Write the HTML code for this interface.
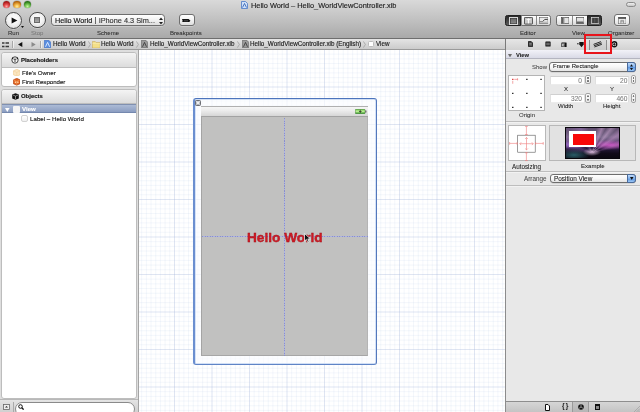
<!DOCTYPE html>
<html><head><meta charset="utf-8">
<style>
*{margin:0;padding:0;box-sizing:border-box}
html,body{width:640px;height:412px;overflow:hidden;background:#e6e6e6}
body{position:relative;font-family:"Liberation Sans",sans-serif;color:#1a1a1a}
.a{position:absolute}
.t{position:absolute;white-space:nowrap;line-height:1;-webkit-text-stroke:.14px currentColor;will-change:transform}
#insp .t{-webkit-text-stroke:.06px currentColor}
#tb .lbl{-webkit-text-stroke:.05px currentColor}
/* toolbar */
#tb{left:0;top:0;width:640px;height:39px;background:linear-gradient(#d9d9d9,#bdbdbd 60%,#a9a9a9);border-bottom:1px solid #6e6e6e}
#bc{left:0;top:39px;width:640px;height:11px;background:linear-gradient(#e4e4e4,#cbcbcb);border-bottom:1px solid #9a9a9a}
#nav{left:0;top:50px;width:139px;height:362px;background:#dedede;border-right:1px solid #a4a4a4}
#canvas{left:139px;top:50px;width:366px;height:362px;background:#fff;overflow:hidden}
#insp{left:505px;top:50px;width:135px;height:362px;background:#e8e8e8}
#insp::before{content:"";position:absolute;left:0;top:0;width:1px;height:362px;background:#8c8c8c;z-index:5}

.tl{width:7.2px;height:7.2px;border-radius:50%;box-shadow:0 0 0 .4px rgba(0,0,0,.25),0 .6px .5px rgba(255,255,255,.5)}
.rb{border-radius:50%;border:1.1px solid #4a4a4a;background:radial-gradient(circle at 50% 40%,#ffffff 0,#f4f4f4 45%,#cfcfcf 100%);box-shadow:0 .6px .5px rgba(255,255,255,.6)}
.lbl{font-size:6px}
.btn{border:1px solid #6e6e6e;background:linear-gradient(#ffffff,#f2f2f2 50%,#dedede);box-shadow:0 .6px .4px rgba(255,255,255,.5)}
.seg{border:1px solid #6e6e6e;border-radius:2.5px;background:linear-gradient(#ffffff,#ededed 50%,#d8d8d8)}
.segsel{background:linear-gradient(#2a2a2a,#5a5a5a);border:1px solid #222}

.sep{top:1.5px;width:1px;height:7.5px;background:#a8a8a8;box-shadow:1px 0 0 rgba(255,255,255,.6)}
.bct{top:2.4px;font-size:6.3px;color:#1c1c1c}
.chev{top:2.2px;font-size:6px;color:#8a8a8a;transform:scaleX(.6);-webkit-text-stroke:0}

.card{background:#fff;border:1px solid #bdbdbd;border-radius:3px}
.chd{background:linear-gradient(#f4f4f4,#e8e8e8 50%,#dcdcdc);border-bottom:1px solid #bdbdbd}
.nh{font-size:5.95px;font-weight:bold;color:#111}
.nt{font-size:6.1px;color:#1a1a1a}

.vdash{background:repeating-linear-gradient(180deg,#8a90cc 0,#8a90cc 1px,#adb3e2 1px,#adb3e2 2.5px)}
.hdash{background:repeating-linear-gradient(90deg,#8a90cc 0,#8a90cc 1px,#adb3e2 1px,#adb3e2 2.5px)}

.il{font-size:6px}
.pop{border:.8px solid #6e6e6e;border-radius:3px;background:linear-gradient(#fff,#f6f6f6 50%,#e4e4e4);box-shadow:0 .5px .4px rgba(0,0,0,.15)}
.popb{border:.8px solid #4a6a9a;border-radius:0 3px 3px 0;background:linear-gradient(#c2dcfa,#7eb0ec 50%,#5a94e0 51%,#9cc8f6)}
.fld{background:#fff;border-top:.6px solid #d0d0d0;border-left:.5px solid #e0e0e0;border-right:.5px solid #e0e0e0;border-bottom:.5px solid #ececec}
.stp{border:.7px solid #a4a4a4;border-radius:2px;background:radial-gradient(circle at 50% 28%,#777 0,#777 .7px,transparent 1.1px),radial-gradient(circle at 50% 72%,#777 0,#777 .7px,transparent 1.1px),linear-gradient(#fdfdfd,#ececec)}
.num{font-size:6.6px;color:#7a7a7a}
.hr{left:1px;width:134px;height:1px;background:#bdbdbd;box-shadow:0 1px 0 #f2f2f2}
</style></head><body>

<div id="tb" class="a">
 <!-- traffic lights -->
 <div class="a tl" style="left:2.8px;top:1.2px;background:radial-gradient(circle at 50% 78%,#ffa8a8 0,#e04848 35%,#a81818 70%,#701010 100%)"></div>
 <div class="a tl" style="left:13.4px;top:1.2px;background:radial-gradient(circle at 50% 78%,#fff0a0 0,#f0b040 35%,#b86a10 70%,#7a4408 100%)"></div>
 <div class="a tl" style="left:24.2px;top:1.2px;background:radial-gradient(circle at 50% 78%,#c8f8a0 0,#70c050 35%,#2a7a18 70%,#1a5010 100%)"></div>
 <div class="t" style="left:250.5px;top:2px;font-size:7.4px;color:#222">Hello World – Hello_WorldViewController.xib</div>
 <svg class="a" style="left:241px;top:1px" width="7" height="8" viewBox="0 0 7 8"><path d="M.5 .5h4l2 2v5h-6z" fill="#cfe0f8" stroke="#4a7ac8" stroke-width=".8"/><path d="M1.5 6.5l2-4 2 4" fill="none" stroke="#2a5ab0" stroke-width=".8"/></svg>
 <div class="a" style="left:625.5px;top:2.3px;width:10.5px;height:5px;border-radius:3px;border:1px solid #8a8a8a;background:linear-gradient(#f0f0f0,#c8c8c8)"></div>
 <!-- run / stop -->
 <div class="a rb" style="left:5.2px;top:11.8px;width:17px;height:17px"></div>
 <svg class="a" style="left:11px;top:16.6px" width="7" height="7" viewBox="0 0 7 7"><path d="M.6 .5L6.4 3.5L.6 6.5z" fill="#111"/></svg>
 <svg class="a" style="left:20.6px;top:25.8px" width="3" height="2" viewBox="0 0 3 2"><path d="M0 0h3L1.5 2z" fill="#111"/></svg>
 <div class="a rb" style="left:29.2px;top:11.8px;width:16.6px;height:16.6px"></div>
 <div class="a" style="left:34.4px;top:17px;width:6px;height:6px;background:linear-gradient(#8a8a8a,#a8a8a8);border:.6px solid #6a6a6a"></div>
 <div class="t lbl" style="left:7.6px;top:30px;color:#2a2a2a">Run</div>
 <div class="t lbl" style="left:30.8px;top:30px;color:#7a7a7a">Stop</div>
 <!-- scheme popup -->
 <div class="a btn" style="left:50.5px;top:14.2px;width:114px;height:12px;border-radius:3.5px"></div>
 <div class="t" style="left:54.6px;top:17px;font-size:7.25px;color:#111">Hello World</div>
 <div class="a" style="left:95px;top:16.6px;width:.8px;height:7.2px;background:#666"></div>
 <div class="t" style="left:98.6px;top:17px;font-size:7.35px;color:#333">iPhone 4.3 Sim...</div>
 <svg class="a" style="left:158.5px;top:16.5px" width="4" height="8" viewBox="0 0 4 8"><path d="M0 3L2 .5L4 3zM0 5L2 7.5L4 5z" fill="#222"/></svg>
 <div class="t lbl" style="left:97px;top:30px;color:#2a2a2a">Scheme</div>
 <!-- breakpoints -->
 <div class="a btn" style="left:178.6px;top:14.2px;width:16.6px;height:12px;border-radius:3px"></div>
 <svg class="a" style="left:182px;top:18.6px" width="8.5" height="3.6" viewBox="0 0 8.5 3.6"><path d="M0 0h6.6L8.5 1.8L6.6 3.6H0l.6-1.8z" fill="#111"/><path d="M2 1.8h4" stroke="#777" stroke-width=".6"/></svg>
 <div class="t lbl" style="left:169.6px;top:30px;color:#2a2a2a">Breakpoints</div>
 <!-- editor segmented -->
 <div class="a seg" style="left:505px;top:15.2px;width:46.4px;height:10.8px"></div>
 <div class="a segsel" style="left:505px;top:15.2px;width:16px;height:10.8px;border-radius:2.5px 0 0 2.5px"></div>
 <div class="a" style="left:535.5px;top:16px;width:1px;height:9.5px;background:#888"></div>
 <div class="a" style="left:520.8px;top:16px;width:1px;height:9.5px;background:#888"></div>
 <div class="a" style="left:509px;top:17px;width:8.8px;height:7.6px;border:.8px solid #d8d8d8;background:linear-gradient(#6a6a6a,#8a8a8a);box-shadow:inset 0 0 0 .6px #333"></div>
 <svg class="a" style="left:523.7px;top:17px" width="9" height="7.5" viewBox="0 0 9 7.5"><rect x=".4" y=".4" width="8.2" height="6.7" rx=".8" fill="#c8c8c8" stroke="#2a2a2a" stroke-width=".8"/><path d="M4.5 1.4v5M2.6 2.6h3.8" stroke="#fafafa" stroke-width="1"/></svg>
 <svg class="a" style="left:538.5px;top:17.4px" width="9.4" height="6.8" viewBox="0 0 9.4 6.8"><rect x=".4" y=".4" width="8.6" height="6" fill="#e8e8e8" stroke="#5a5a5a" stroke-width=".6"/><path d="M.8 4.8h2.6l2.4-2.4h3" stroke="#2a2a2a" stroke-width=".9" fill="none"/><rect x=".8" y="4.6" width="7.8" height="1.4" fill="#bdbdbd"/></svg>
 <!-- view segmented -->
 <div class="a seg" style="left:556.3px;top:15.2px;width:45.7px;height:10.8px"></div>
 <div class="a segsel" style="left:587.3px;top:15.2px;width:14.7px;height:10.8px;border-radius:0 2.5px 2.5px 0"></div>
 <div class="a" style="left:572.3px;top:16px;width:1px;height:9.5px;background:#888"></div>
 <svg class="a" style="left:560.8px;top:17px" width="8.4" height="7" viewBox="0 0 8.4 7"><defs><linearGradient id="g1"><stop offset="0" stop-color="#3a3a3a"/><stop offset="1" stop-color="#d8d8d8"/></linearGradient></defs><rect x=".4" y=".4" width="7.6" height="6.2" fill="#e4e4e4" stroke="#4a4a4a" stroke-width=".7"/><rect x=".8" y=".8" width="3.2" height="5.4" fill="url(#g1)"/></svg>
 <svg class="a" style="left:575.6px;top:17px" width="8.4" height="7" viewBox="0 0 8.4 7"><defs><linearGradient id="g2" x1="0" y1="0" x2="0" y2="1"><stop offset="0" stop-color="#d8d8d8"/><stop offset="1" stop-color="#3a3a3a"/></linearGradient></defs><rect x=".4" y=".4" width="7.6" height="6.2" fill="#e4e4e4" stroke="#4a4a4a" stroke-width=".7"/><rect x=".8" y="3.6" width="6.8" height="2.6" fill="url(#g2)"/></svg>
 <svg class="a" style="left:590.5px;top:17px" width="8.4" height="7" viewBox="0 0 8.4 7"><rect x=".4" y=".4" width="7.6" height="6.2" fill="#4a4a4a" stroke="#e0e0e0" stroke-width=".7"/><rect x="2.6" y="1" width="3.2" height="5" fill="#2a2a2a"/><path d="M3.4 1.2v4.6M4.9 1.2v4.6" stroke="#8a8a8a" stroke-width=".5"/></svg>
 <div class="t lbl" style="left:519.6px;top:30px;color:#2a2a2a">Editor</div>
 <div class="t lbl" style="left:572px;top:30px;color:#2a2a2a">View</div>
 <!-- organizer -->
 <div class="a btn" style="left:614.4px;top:14.2px;width:15.2px;height:12px;border-radius:3px"></div>
 <svg class="a" style="left:618px;top:16.8px" width="8.4" height="7.2" viewBox="0 0 8.4 7.2"><rect x=".4" y=".4" width="7.6" height="6.4" fill="#ececec" stroke="#6a6a6a" stroke-width=".6"/><rect x=".4" y=".4" width="7.6" height="1.3" fill="#2a2a2a"/><path d="M2.8 6.4V3.4h2.8v3M2.8 4.8h2.8" fill="none" stroke="#6a6a6a" stroke-width=".6"/></svg>
 <div class="t lbl" style="left:607.6px;top:30px;color:#2a2a2a">Organizer</div>
</div>


<div id="bc" class="a">
 <svg class="a" style="left:2px;top:2.5px" width="8" height="6" viewBox="0 0 8 6"><path d="M0 1h2.5M3.5 1H7M0 4.5h2.5M3.5 4.5H7" stroke="#3a3a3a" stroke-width="1.3"/></svg>
 <div class="a sep" style="left:12px"></div>
 <svg class="a" style="left:18.3px;top:3px" width="5" height="5" viewBox="0 0 5 5"><path d="M4.3 0L0 2.5L4.3 5z" fill="#111"/></svg>
 <svg class="a" style="left:30.9px;top:3px" width="5" height="5" viewBox="0 0 5 5"><path d="M.5 0L4.7 2.5L.5 5z" fill="#8a8a8a"/></svg>
 <div class="a sep" style="left:40.2px"></div>
 <svg class="a" style="left:44px;top:1.3px" width="7" height="8" viewBox="0 0 7 8"><path d="M.3 .3h4.5l2 2v5.4H.3z" fill="#5a8ee0" stroke="#3a6ac0" stroke-width=".6"/><path d="M1.5 6.8L3.6 2.4L5.6 6.8" fill="none" stroke="#e8f0ff" stroke-width=".9"/></svg>
 <div class="t bct" style="left:53px">Hello World</div>
 <svg class="a" style="left:87.6px;top:1.8px" width="3" height="7" viewBox="0 0 3 7"><path d="M.4 .4L2.4 3.5L.4 6.6" fill="none" stroke="#9a9a9a" stroke-width=".7"/></svg>
 <svg class="a" style="left:91.5px;top:1.8px" width="8.6" height="7.4" viewBox="0 0 8.6 7.4"><path d="M.3 .6h3l.8.9h4.2v5.6H.3z" fill="#f4e08a" stroke="#c0a050" stroke-width=".55"/><path d="M.4 2.3h7.9" stroke="#fff4c0" stroke-width=".5"/></svg>
 <div class="t bct" style="left:101.3px">Hello World</div>
 <svg class="a" style="left:135.9px;top:1.8px" width="3" height="7" viewBox="0 0 3 7"><path d="M.4 .4L2.4 3.5L.4 6.6" fill="none" stroke="#9a9a9a" stroke-width=".7"/></svg>
 <svg class="a" style="left:141.3px;top:1.3px" width="7" height="8" viewBox="0 0 7 8"><path d="M.3 .3h4.5l2 2v5.4H.3z" fill="#9a9a9a" stroke="#5a5a5a" stroke-width=".6"/><path d="M1.5 6.8L3.5 2.4L5.5 6.8" fill="none" stroke="#333" stroke-width=".8"/></svg>
 <div class="t bct" style="left:149.5px">Hello_WorldViewController.xib</div>
 <svg class="a" style="left:237.0px;top:1.8px" width="3" height="7" viewBox="0 0 3 7"><path d="M.4 .4L2.4 3.5L.4 6.6" fill="none" stroke="#9a9a9a" stroke-width=".7"/></svg>
 <svg class="a" style="left:242.3px;top:1.3px" width="7" height="8" viewBox="0 0 7 8"><path d="M.3 .3h4.5l2 2v5.4H.3z" fill="#9a9a9a" stroke="#5a5a5a" stroke-width=".6"/><path d="M1.5 6.8L3.5 2.4L5.5 6.8" fill="none" stroke="#333" stroke-width=".8"/></svg>
 <div class="t bct" style="left:250px">Hello_WorldViewController.xib (English)</div>
 <svg class="a" style="left:362.9px;top:1.8px" width="3" height="7" viewBox="0 0 3 7"><path d="M.4 .4L2.4 3.5L.4 6.6" fill="none" stroke="#9a9a9a" stroke-width=".7"/></svg>
 <div class="a" style="left:367.5px;top:1.6px;width:6.8px;height:6.8px;border-radius:1.5px;background:#fff;border:.5px solid #bbb"></div>
 <div class="t bct" style="left:376px">View</div>
 <!-- inspector tab bar -->
 <div class="a" style="left:504.6px;top:-.5px;width:1px;height:11px;background:#7a7a7a"></div>
 <div class="a" style="left:505.6px;top:0;width:134.4px;height:10.5px;background:linear-gradient(#e6e6e6,#d2d2d2)"></div>
 <svg class="a" style="left:528.4px;top:2.4px" width="5" height="6" viewBox="0 0 5 6"><path d="M.5 .4h2.6l1.5 1.5v3.7H.5z" fill="#444" stroke="#111" stroke-width=".8"/><path d="M1.3 2.5h2.4M1.3 3.8h2.4" stroke="#bbb" stroke-width=".5"/></svg>
 <svg class="a" style="left:544.8px;top:2.4px" width="6" height="6" viewBox="0 0 6 6"><rect x=".4" y=".4" width="5.2" height="5.2" rx=".6" fill="#111"/><path d="M1.2 2.2h3.6M1.2 3.8h3.6" stroke="#ddd" stroke-width=".6"/></svg>
 <svg class="a" style="left:561px;top:2.6px" width="6" height="5.5" viewBox="0 0 6 5.5"><rect x=".4" y=".4" width="5.2" height="4.8" rx=".5" fill="#111"/><rect x="1.1" y="1.5" width="2.6" height="3" fill="#ccc"/><rect x="2.6" y="2.5" width="1.2" height="1.2" fill="#111"/></svg>
 <svg class="a" style="left:576.5px;top:2.2px" width="7" height="6.5" viewBox="0 0 7 6.5"><circle cx=".9" cy="2.8" r=".7" fill="#111"/><path d="M2.3 1h4.4v2.6L4.5 6.2L2.3 3.6z" fill="#111"/></svg>
 <div class="a" style="left:589px;top:.5px;width:.8px;height:10px;background:#8e8e8e"></div>
 <div class="a" style="left:589.8px;top:0;width:15.8px;height:10.5px;background:linear-gradient(#dcdcdc,#cacaca)"></div>
 <div class="a" style="left:605.5px;top:.5px;width:.8px;height:10px;background:#8e8e8e"></div>
 <svg class="a" style="left:593.2px;top:2.2px" width="9.4" height="6.4" viewBox="0 0 9.4 6.4"><path d="M.5 3.4L8 .6M.9 4.8L8.8 1.9M1.4 6L8.9 3.3" stroke="#1a1a1a" stroke-width=".9"/></svg>
 <svg class="a" style="left:611px;top:2.3px" width="6.5" height="6.5" viewBox="0 0 6.5 6.5"><circle cx="3.25" cy="3.25" r="2.5" fill="#fff" stroke="#111" stroke-width="1.3"/><path d="M3.25 1.8v2.9M1.8 3.25h2.9" stroke="#111" stroke-width="1"/></svg>
</div>


<div id="nav" class="a">
 <div class="a card" style="left:0.8px;top:2.3px;width:136.2px;height:34.4px"></div>
 <div class="a chd" style="left:1.8px;top:3.3px;width:134.2px;height:14.8px;border-radius:2.5px 2.5px 0 0"></div>
 <svg class="a" style="left:11px;top:6.2px" width="8" height="8" viewBox="0 0 8 8"><circle cx="4" cy="4" r="3.2" fill="#f4f4f4" stroke="#333" stroke-width=".9"/><path d="M2.6 3.2h2.8M4 3.2v2.8" stroke="#333" stroke-width=".9"/><circle cx="1.6" cy="2.3" r=".7" fill="#111"/><circle cx="6.4" cy="2.3" r=".7" fill="#111"/></svg>
 <div class="t nh" style="left:20.8px;top:7.9px">Placeholders</div>
 <svg class="a" style="left:12.9px;top:18.8px" width="7.5" height="7.5" viewBox="0 0 7.5 7.5"><path d="M3.75 .3L7.2 1.9v3.8L3.75 7.2L.3 5.7V1.9z" fill="#fbe6c0" stroke="#f0c888" stroke-width=".6"/><path d="M.6 2L3.75 3.4L6.9 2M3.75 3.4v3.6" fill="none" stroke="#f2cf98" stroke-width=".5"/></svg>
 <div class="t nt" style="left:22.3px;top:19.8px">File's Owner</div>
 <svg class="a" style="left:12.9px;top:28px" width="7.5" height="7.5" viewBox="0 0 7.5 7.5"><path d="M3.75 .3L7.2 1.9v3.8L3.75 7.2L.3 5.7V1.9z" fill="#e0601c" stroke="#a83a10" stroke-width=".6"/><path d="M.6 2L3.75 3.4L6.9 2M3.75 3.4v3.6" fill="none" stroke="#fbb070" stroke-width=".5"/><rect x="1.8" y="3.5" width="1.4" height="1.6" fill="#ffd0a0"/><rect x="4.2" y="3.5" width="1.4" height="1.6" fill="#ffd0a0"/></svg>
 <div class="t nt" style="left:22.3px;top:29px">First Responder</div>

 <div class="a card" style="left:0.8px;top:39.2px;width:136.2px;height:309.5px"></div>
 <div class="a chd" style="left:1.8px;top:40.2px;width:134.2px;height:14px;border-radius:2.5px 2.5px 0 0"></div>
 <svg class="a" style="left:11.6px;top:43.2px" width="7" height="7" viewBox="0 0 7 7"><path d="M3.5 .2L6.8 1.6v3.8L3.5 6.8L.2 5.4V1.6z" fill="#111"/><path d="M1 2L3.5 3.1L6 2M3.5 3.1v3" fill="none" stroke="#ddd" stroke-width=".55"/></svg>
 <div class="t nh" style="left:21px;top:44.1px">Objects</div>
 <div class="a" style="left:1.8px;top:54.2px;width:134.2px;height:9.2px;background:linear-gradient(#acbbd6,#8b9dc1);border-top:.8px solid #8090b0;border-bottom:.6px solid #7488ae"></div>
 <svg class="a" style="left:4.8px;top:57.6px" width="5" height="4" viewBox="0 0 5 4"><path d="M0 0h4.6L2.3 4z" fill="#fff"/></svg>
 <div class="a" style="left:13.1px;top:55.9px;width:6.6px;height:7px;background:#f6f6f6;border-radius:1px"></div>
 <div class="t" style="left:22.3px;top:56.3px;font-size:6.1px;font-weight:bold;color:#fff">View</div>
 <div class="a" style="left:20.5px;top:65px;width:7px;height:6.8px;background:linear-gradient(#fff,#f0f0f0);border:.6px solid #d2d2d2;border-radius:2px"></div>
 <div class="t nt" style="left:29.7px;top:66px;font-size:6.2px">Label – Hello World</div>
 <!-- bottom bar -->
 <div class="a" style="left:0;top:349px;width:138px;height:13px;background:linear-gradient(#e4e4e4,#d0d0d0);border-top:1px solid #b8b8b8"></div>
 <svg class="a" style="left:2.8px;top:354px" width="7" height="6" viewBox="0 0 7 6"><rect x=".5" y=".5" width="6" height="5" fill="#eee" stroke="#666" stroke-width=".8"/><path d="M2 3.5L3.5 2L5 3.5" fill="#222"/></svg>
 <div class="a" style="left:12.8px;top:352px;width:1px;height:10px;background:#aaa"></div>
 <div class="a" style="left:15.2px;top:352.3px;width:119.5px;height:14px;border-radius:7px;background:#fff;border:1px solid #8a8a8a"></div>
 <svg class="a" style="left:18.3px;top:354.2px" width="6" height="6" viewBox="0 0 6 6"><circle cx="2.5" cy="2.5" r="1.8" fill="none" stroke="#111" stroke-width="1"/><path d="M3.8 3.8L5.6 5.6" stroke="#111" stroke-width="1.3"/></svg>
</div>


<div id="canvas" class="a">
 <svg class="a" style="left:0;top:0" width="366" height="362"><path d="M2.69 0V362M7.38 0V362M12.06 0V362M16.75 0V362M21.44 0V362M26.12 0V362M30.81 0V362M40.19 0V362M44.88 0V362M49.56 0V362M54.25 0V362M58.94 0V362M63.62 0V362M68.31 0V362M77.69 0V362M82.38 0V362M87.06 0V362M91.75 0V362M96.44 0V362M101.12 0V362M105.81 0V362M115.19 0V362M119.88 0V362M124.56 0V362M129.25 0V362M133.94 0V362M138.62 0V362M143.31 0V362M152.69 0V362M157.38 0V362M162.06 0V362M166.75 0V362M171.44 0V362M176.12 0V362M180.81 0V362M190.19 0V362M194.88 0V362M199.56 0V362M204.25 0V362M208.94 0V362M213.62 0V362M218.31 0V362M227.69 0V362M232.38 0V362M237.06 0V362M241.75 0V362M246.44 0V362M251.12 0V362M255.81 0V362M265.19 0V362M269.88 0V362M274.56 0V362M279.25 0V362M283.94 0V362M288.62 0V362M293.31 0V362M302.69 0V362M307.38 0V362M312.06 0V362M316.75 0V362M321.44 0V362M326.12 0V362M330.81 0V362M340.19 0V362M344.88 0V362M349.56 0V362M354.25 0V362M358.94 0V362M363.62 0V362M0 4.19H366M0 8.88H366M0 13.56H366M0 18.25H366M0 22.94H366M0 27.62H366M0 32.31H366M0 41.69H366M0 46.38H366M0 51.06H366M0 55.75H366M0 60.44H366M0 65.12H366M0 69.81H366M0 79.19H366M0 83.88H366M0 88.56H366M0 93.25H366M0 97.94H366M0 102.62H366M0 107.31H366M0 116.69H366M0 121.38H366M0 126.06H366M0 130.75H366M0 135.44H366M0 140.12H366M0 144.81H366M0 154.19H366M0 158.88H366M0 163.56H366M0 168.25H366M0 172.94H366M0 177.62H366M0 182.31H366M0 191.69H366M0 196.38H366M0 201.06H366M0 205.75H366M0 210.44H366M0 215.12H366M0 219.81H366M0 229.19H366M0 233.88H366M0 238.56H366M0 243.25H366M0 247.94H366M0 252.62H366M0 257.31H366M0 266.69H366M0 271.38H366M0 276.06H366M0 280.75H366M0 285.44H366M0 290.12H366M0 294.81H366M0 304.19H366M0 308.88H366M0 313.56H366M0 318.25H366M0 322.94H366M0 327.62H366M0 332.31H366M0 341.69H366M0 346.38H366M0 351.06H366M0 355.75H366M0 360.44H366" stroke="rgb(178,196,226)" stroke-opacity=".14" stroke-width="1" fill="none"/><path d="M35.50 0V362M73.00 0V362M110.50 0V362M148.00 0V362M185.50 0V362M223.00 0V362M260.50 0V362M298.00 0V362M335.50 0V362M0 -0.50H366M0 37.00H366M0 74.50H366M0 112.00H366M0 149.50H366M0 187.00H366M0 224.50H366M0 262.00H366M0 299.50H366M0 337.00H366" stroke="rgb(160,180,218)" stroke-opacity=".34" stroke-width="1" fill="none"/></svg>
 <div class="a" style="left:53.6px;top:48.4px;width:184.4px;height:266.4px;border-radius:3px;border:1.8px solid #5f84c6;border-left:2.1px solid #6a8ed0;border-top-color:#4c74bc;border-right-color:#5478bc;box-shadow:inset 0 0 0 .7px #c4d6f2;background:rgba(250,252,255,.66)"></div>
 <div class="a" style="left:56px;top:50.4px;width:5.8px;height:5.5px;border-radius:1.2px;border:.9px solid #6c6e74;background:linear-gradient(#d4d7dc,#aeb2b8)"></div>
 <svg class="a" style="left:57px;top:51.3px" width="4" height="4" viewBox="0 0 4 4"><path d="M.7 .7L3.3 3.3M3.3 .7L.7 3.3" stroke="#f4f4f4" stroke-width=".9"/></svg>
 <!-- view -->
 <div class="a" style="left:62px;top:56.3px;width:167px;height:249.4px;background:#c1c1c0;border-left:.6px solid #a4a4a4;border-bottom:.8px solid #a6a6a6;border-right:.5px solid #b4b4b4"></div>
 <div class="a" style="left:62px;top:56.3px;width:167px;height:10.9px;background:linear-gradient(#f6f6f6,#ececec 40%,#d6d6d6);border-top:.8px solid #b0b0b0;border-bottom:1.2px solid #a2a2a2"></div>
 <svg class="a" style="left:215.6px;top:58.8px" width="12" height="5" viewBox="0 0 12 5"><defs><linearGradient id="bg1" x1="0" y1="0" x2="0" y2="1"><stop offset="0" stop-color="#5fbf3a"/><stop offset=".45" stop-color="#c8f5a0"/><stop offset="1" stop-color="#2e9420"/></linearGradient></defs><rect x=".3" y=".3" width="9.8" height="4.4" rx=".8" fill="url(#bg1)" stroke="#3a7a30" stroke-width=".5"/><path d="M10.3 1.5h1.1v2h-1.1z" fill="#555"/><path d="M5.8 .4L3.8 2.8h1.6L4.4 4.6L6.9 2.2H5.3z" fill="#111"/></svg>
 <!-- crosshair -->
 <div class="a vdash" style="left:145px;top:67.5px;width:1.3px;height:238px"></div>
 <div class="a hdash" style="left:62.8px;top:186px;width:166px;height:1.3px"></div>
 <div class="t" style="left:108.4px;top:180.5px;font-size:13.67px;font-weight:bold;color:#d01a24;-webkit-text-stroke:.35px #a01018">Hello World</div>
 <svg class="a" style="left:165.2px;top:182.8px" width="7" height="10" viewBox="0 0 7 10"><path d="M.5 .5v7.6l1.9-1.7L3.7 9.3l1.3-.6L3.8 5.9h2.6z" fill="#111" stroke="#fff" stroke-width=".7"/></svg>
</div>


<div id="insp" class="a">
 <div class="a" style="left:.5px;top:0;width:134.5px;height:9.3px;background:linear-gradient(#f2f2f8,#d9dae6);border-bottom:1px solid #b4b5c0"></div>
 <svg class="a" style="left:3.4px;top:3.6px" width="4" height="3.5" viewBox="0 0 4 3.5"><path d="M0 0h4L2 3.4z" fill="#6a6a6a"/></svg>
 <div class="t" style="left:11.2px;top:2.7px;font-size:5.8px;font-weight:bold;color:#1a1a1a">View</div>
 <div class="t il" style="left:26.6px;top:13.7px;color:#4a4a4a">Show</div>
 <div class="a pop" style="left:43.9px;top:12.2px;width:87px;height:9.4px"></div>
 <div class="a popb" style="left:121.8px;top:12.2px;width:9.1px;height:9.4px"></div>
 <svg class="a" style="left:124.8px;top:13.8px" width="3" height="6.5" viewBox="0 0 3 6.5"><path d="M0 2.5L1.5 .3L3 2.5zM0 4L1.5 6.2L3 4z" fill="#111"/></svg>
 <div class="t" style="left:48.4px;top:14px;font-size:5.95px;color:#111">Frame Rectangle</div>
 <!-- origin -->
 <div class="a" style="left:3px;top:25.3px;width:37.4px;height:36px;background:#fff;border:.8px solid #b4b4b4"></div>
 <svg class="a" style="left:3px;top:25.3px" width="38" height="36" viewBox="0 0 38 36">
  <g fill="#1a1a1a"><rect x="18.1" y="3.8" width="1.5" height="1.1"/><rect x="32.3" y="3.8" width="1.5" height="1.1"/>
  <rect x="4" y="17.8" width="1.5" height="1.1"/><rect x="18.1" y="17.8" width="1.5" height="1.1"/><rect x="32.3" y="17.8" width="1.5" height="1.1"/>
  <rect x="4" y="31.8" width="1.5" height="1.1"/><rect x="18.1" y="31.8" width="1.5" height="1.1"/><rect x="32.3" y="31.8" width="1.5" height="1.1"/></g>
  <rect x="4" y="3.8" width="1.5" height="1.1" fill="#e03030"/>
  <path d="M6.3 4.35h3.6M9 3.3l1.1 1.05L9 5.4M4.75 5.8v3" stroke="#ea6a6a" stroke-width=".6" fill="none"/>
 </svg>
 <div class="t il" style="left:14.3px;top:62.2px;color:#333">Origin</div>
 <!-- fields -->
 <div class="a fld" style="left:44.5px;top:25.5px;width:35.5px;height:9.2px"></div>
 <div class="a stp" style="left:80.2px;top:25.1px;width:5.6px;height:9.4px"></div>
 <div class="a fld" style="left:89.7px;top:25.5px;width:34px;height:9.2px"></div>
 <div class="a stp" style="left:125.6px;top:25.1px;width:5.6px;height:9.4px"></div>
 <div class="a fld" style="left:44.5px;top:43.6px;width:35.5px;height:9.5px"></div>
 <div class="a stp" style="left:80.2px;top:43.4px;width:5.6px;height:9.5px"></div>
 <div class="a fld" style="left:89.7px;top:43.6px;width:34px;height:9.5px"></div>
 <div class="a stp" style="left:125.6px;top:43.4px;width:5.6px;height:9.5px"></div>
 <div class="t num" style="left:44.5px;width:32px;top:28px;text-align:right">0</div>
 <div class="t num" style="left:89.7px;width:32.4px;top:28px;text-align:right">20</div>
 <div class="t num" style="left:44.5px;width:32px;top:46.2px;text-align:right">320</div>
 <div class="t num" style="left:89.7px;width:32.4px;top:46.2px;text-align:right">460</div>
 <div class="t il" style="left:59.1px;top:35.5px;color:#1a1a1a">X</div>
 <div class="t il" style="left:105px;top:35.5px;color:#1a1a1a">Y</div>
 <div class="t il" style="left:52.8px;top:53.3px;color:#1a1a1a">Width</div>
 <div class="t il" style="left:97.6px;top:53.3px;color:#1a1a1a">Height</div>
 <div class="a hr" style="top:71.2px"></div>
 <!-- autosizing -->
 <div class="a" style="left:3.4px;top:74.6px;width:37.2px;height:36.7px;background:#fff;border:.8px solid #b8b8b8"></div>
 <svg class="a" style="left:3.4px;top:74.6px" width="38" height="37" viewBox="0 0 38 37">
  <rect x="9.7" y="10.2" width="17.5" height="17" fill="none" stroke="#5a5a5a" stroke-width=".6"/>
  <g stroke="#ee7c7c" stroke-width=".6" fill="none">
   <path d="M18.4 1.4v8.8M17 1.4h2.8M17 9.5h2.8"/>
   <path d="M18.4 27.2v8.4M17 27.8h2.8M17 35.6h2.8"/>
   <path d="M1.6 18.4h8.1M1.6 17v2.8M9.1 17v2.8"/>
   <path d="M27.2 18.4h8.2M35.2 17v2.8M27.6 17v2.8"/>
   <path d="M11.8 18.7h13.4M13.2 17.3l-1.4 1.4 1.4 1.4M23.8 17.3l1.4 1.4-1.4 1.4"/>
   <path d="M18.5 12.5v12.4M17.1 13.9l1.4-1.4 1.4 1.4M17.1 23.5l1.4 1.4 1.4-1.4"/>
  </g>
 </svg>
 <div class="t il" style="left:7.1px;top:113.6px;color:#1a1a1a;font-size:6.3px">Autosizing</div>
 <!-- example -->
 <div class="a" style="left:44.2px;top:75.2px;width:87px;height:36px;background:#e2e2e2;border:.8px solid #b8b8b8"></div>
 <div class="a" style="left:60.4px;top:76.9px;width:54.7px;height:32.5px;background:#08060c;overflow:hidden">
  <div class="a" style="left:.9px;top:.9px;width:52.9px;height:30.7px;background:
   radial-gradient(ellipse 9px 4px at 26px 24px,rgba(255,220,255,.8),transparent 100%),
   conic-gradient(from 0deg at 26px 25px,transparent 0deg,rgba(255,200,255,.0) 10deg,rgba(255,200,250,.35) 22deg,transparent 30deg,rgba(255,210,255,.32) 38deg,transparent 46deg,rgba(240,170,240,.3) 55deg,transparent 64deg,rgba(230,150,230,.22) 72deg,transparent 80deg,transparent 270deg,rgba(180,120,220,.3) 290deg,transparent 310deg,rgba(200,150,240,.3) 335deg,transparent 352deg),
   radial-gradient(ellipse 22px 5px at 44px 17px,rgba(220,90,210,.85),transparent 100%),
   radial-gradient(ellipse 14px 4px at 6px 17px,rgba(170,120,230,.8),transparent 100%),
   radial-gradient(ellipse 16px 6px at 8px 27px,rgba(50,120,130,.75),transparent 100%),
   linear-gradient(#5e4c6c,#7c6a8c 30%,#5a4470 50%,#24183a 68%,#100a18 85%,#0a0810)"></div>
 </div>
 <div class="a" style="left:64.3px;top:80.8px;width:26.6px;height:16.5px;background:#fff"></div>
 <div class="a" style="left:67.9px;top:83.7px;width:21.1px;height:11.1px;background:#f80808"></div>
 <div class="t il" style="left:75.6px;top:113.3px;color:#1a1a1a;font-size:6.05px">Example</div>
 <div class="a hr" style="top:120.6px"></div>
 <div class="t il" style="left:19px;top:125.6px;color:#4a4a4a;font-size:6.3px">Arrange</div>
 <div class="a pop" style="left:44.9px;top:123.7px;width:86.3px;height:9.4px"></div>
 <div class="a popb" style="left:122px;top:123.7px;width:9.2px;height:9.4px"></div>
 <svg class="a" style="left:125px;top:126.8px" width="3.5" height="3" viewBox="0 0 3.5 3"><path d="M0 0h3.5L1.75 3z" fill="#111"/></svg>
 <div class="t" style="left:48.6px;top:125.6px;font-size:6.4px;color:#111">Position View</div>
 <div class="a hr" style="top:135.2px"></div>
 <!-- bottom bar -->
 <div class="a" style="left:0;top:350.5px;width:135px;height:12px;background:linear-gradient(#d6d6d6,#c2c2c2);border-top:1px solid #8e8e8e"></div>
 <div class="a" style="left:67px;top:351.5px;width:16.6px;height:11px;background:linear-gradient(#c4c4c4,#b4b4b4);border-left:.8px solid #9a9a9a;border-right:.8px solid #9a9a9a"></div>
 <svg class="a" style="left:40.4px;top:353.6px" width="5" height="7" viewBox="0 0 5 7"><path d="M.5 .5h2.5l1.5 1.5v4.5h-4z" fill="#fff" stroke="#111" stroke-width="1"/></svg>
 <div class="t" style="left:56.6px;top:353.4px;font-size:6.6px;color:#222;font-weight:bold;letter-spacing:-.3px">{ }</div>
 <svg class="a" style="left:72.7px;top:353.5px" width="6" height="6" viewBox="0 0 6 6"><circle cx="3" cy="3" r="2.8" fill="#111"/><path d="M3 .5v2.5M3 3L.8 4.4M3 3l2.2 1.4" stroke="#ddd" stroke-width=".6"/></svg>
 <div class="a" style="left:89.6px;top:354.2px;width:5.6px;height:5.8px;background:#111"></div><div class="a" style="left:91.2px;top:355.6px;width:2.4px;height:3px;background:#888"></div>
 <svg class="a" style="left:128px;top:355px" width="7" height="7" viewBox="0 0 7 7"><path d="M1 7L7 1M3.5 7L7 3.5M5.5 7L7 5.5" stroke="#999" stroke-width=".6"/></svg>
</div>

<div class="a" style="left:584.3px;top:33.8px;width:27.4px;height:19.8px;border:2.4px solid #e8141c;box-shadow:0 0 .5px rgba(120,0,0,.5)"></div>
</body></html>
